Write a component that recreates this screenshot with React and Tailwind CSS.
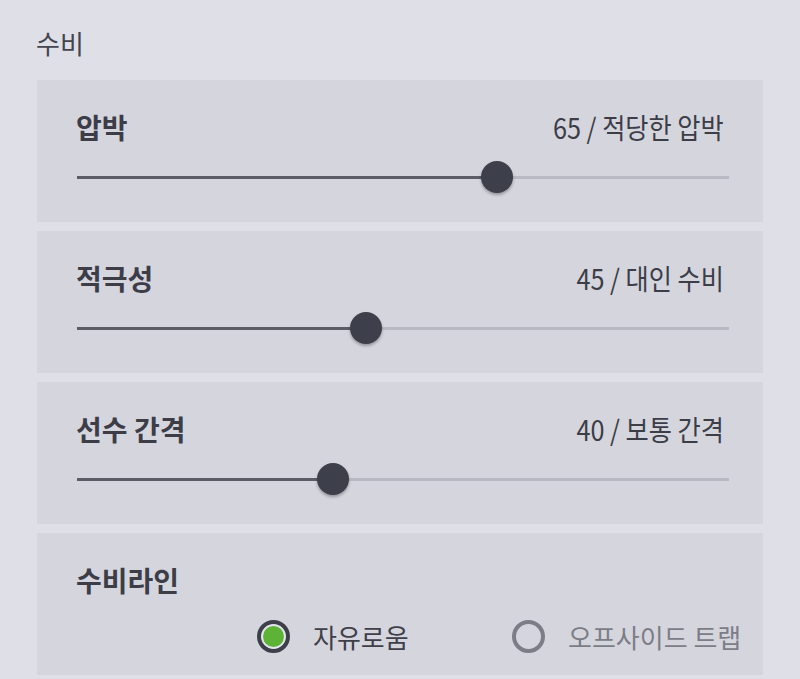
import React from 'react'

const sliders = [
  { label: '압박', value: 65, desc: '적당한 압박' },
  { label: '적극성', value: 45, desc: '대인 수비' },
  { label: '선수 간격', value: 40, desc: '보통 간격' },
]

function Slider({ value }) {
  // thumb centre runs a few px wider than the drawn track
  const left = -6 + (value / 100) * 655
  return (
    <div className="relative h-[32px] mt-[16px] mr-[-5px] ml-[1px]">
      <div className="absolute left-0 right-0 top-[15px] h-[3px] bg-[#b9b9c3]" />
      <div className="absolute left-0 top-[15px] h-[3px] bg-[#5b5c65]" style={{ width: left }} />
      <div
        className="absolute top-0 w-[32px] h-[32px] rounded-full bg-[#3d3f4a] shadow-[0_2px_3px_rgba(0,0,0,0.3)]"
        style={{ left: left - 16 }}
      />
    </div>
  )
}

function Radio({ checked, label }) {
  return (
    <div className="flex items-center gap-[23px] w-[255px] shrink-0">
      {checked ? (
        <span className="w-[33px] h-[33px] rounded-full border-[4px] border-[#3d3f4a] flex items-center justify-center">
          <span className="w-[21px] h-[21px] rounded-full bg-[#5db335] ring-[1.5px] ring-[#e6e6ee]" />
        </span>
      ) : (
        <span className="w-[33px] h-[33px] rounded-full border-[4px] border-[#7c7d86]" />
      )}
      <span className={`text-[26px] leading-none whitespace-nowrap ${checked ? 'text-[#3e3f49]' : 'text-[#7c7d86]'}`}>{label}</span>
    </div>
  )
}

export default function App() {
  return (
    <div
      className="w-[800px] h-[679px] overflow-hidden bg-[#dfdfe8] text-[#3c3d47]"
      style={{ fontFamily: '"Noto Sans CJK KR", "Noto Sans", sans-serif' }}
    >
      <h2 className="pl-[36px] pt-[26px] h-[80px] text-[26px] leading-[34px] font-normal text-[#44454f]">수비</h2>
      <div className="flex flex-col gap-[9px] ml-[37px] w-[726px]">
        {sliders.map(s => (
          <div key={s.label} className="bg-[#d5d5de] h-[142px] pl-[39px] pr-[39px] pt-[29px]">
            <div className="flex items-center justify-between h-[36px]">
              <span className="text-[28px] font-bold leading-none">{s.label}</span>
              <span className="text-[28px] leading-none origin-right scale-x-[0.9] whitespace-nowrap">
                {s.value} / {s.desc}
              </span>
            </div>
            <Slider value={s.value} />
          </div>
        ))}
        <div className="bg-[#d5d5de] h-[142px] pl-[39px] pr-[34px] pt-[29px]">
          <div className="flex items-center h-[36px]">
            <span className="text-[28px] font-bold leading-none">수비라인</span>
          </div>
          <div className="flex ml-[181px] mt-[22px]">
            <Radio checked label="자유로움" />
            <Radio label="오프사이드 트랩" />
          </div>
        </div>
      </div>
    </div>
  )
}
